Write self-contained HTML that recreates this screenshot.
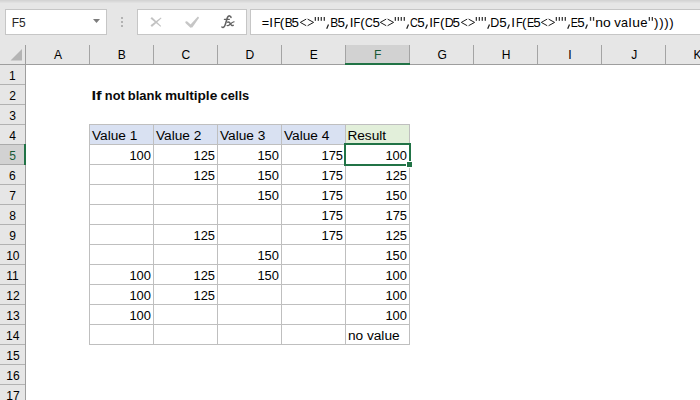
<!DOCTYPE html>
<html><head><meta charset="utf-8"><style>
html,body{margin:0;padding:0;background:#fff;overflow:hidden;width:700px;height:400px}
svg{display:block;font-family:"Liberation Sans", sans-serif}
</style></head><body>
<svg width="700" height="400" viewBox="0 0 700 400">
<rect x="0" y="0" width="700" height="400" fill="#ffffff"/>
<rect x="0" y="0" width="700" height="65" fill="#e6e6e6"/>
<rect x="0" y="0" width="700" height="1" fill="#d4d4d4"/>
<rect x="0" y="1" width="700" height="1" fill="#dadada"/>
<rect x="0" y="2" width="700" height="1" fill="#e0e0e0"/>
<rect x="5" y="9" width="102" height="26" fill="#c6c6c6"/>
<rect x="6" y="10" width="100" height="24" fill="#ffffff"/>
<rect x="137" y="9" width="110" height="26" fill="#c6c6c6"/>
<rect x="138" y="10" width="108" height="24" fill="#ffffff"/>
<rect x="250" y="9" width="456" height="26" fill="#c6c6c6"/>
<rect x="251" y="10" width="454" height="24" fill="#ffffff"/>
<text transform="translate(11.767,27.000) scale(0.8748,1)" font-size="13.70" fill="#262626">F5</text>
<path d="M93 19 L100 19 L96.5 23 Z" fill="#7c7c7c"/>
<rect x="121" y="17" width="2" height="2" fill="#b2b2b2"/>
<rect x="121" y="21" width="2" height="2" fill="#b2b2b2"/>
<rect x="121" y="25" width="2" height="2" fill="#b2b2b2"/>
<path d="M150.47 18.62 L151.93 16.98 L161.13 25.93 L160.47 26.67 Z" fill="#c2c2c2"/>
<path d="M160.88 17.52 L161.52 18.28 L151.90 27.05 L150.50 25.35 Z" fill="#c2c2c2"/>
<path d="M186.5 22.4 L191 26.5" stroke="#c6c6c6" stroke-width="2.4" fill="none" stroke-linecap="round"/>
<path d="M189.6 25.4 L197.9 16.6 L199.1 17.8 L192.3 27.4 Z" fill="#c6c6c6"/>
<g fill="none" stroke="#626262" stroke-linecap="round"><path d="M231 17.4 C231 15.6, 228.6 15.3, 227.6 17.1 C226.8 18.6, 225.8 23.6, 224.8 25.8 C224.1 27.4, 222.8 27.9, 221.9 27" stroke-width="1.55"/><path d="M224.4 19.4 L229.3 19.4" stroke-width="1.15"/><path d="M227.6 22.1 C229 21.5, 229.9 22.6, 230.6 24 C231.2 25.2, 232 25.9, 233.2 25.3" stroke-width="1.5"/><path d="M234 21.9 C232.9 21.5, 231.2 23.2, 229.8 24.5 C228.9 25.4, 228 25.8, 227.1 25.5" stroke-width="1.25"/></g>
<g font-size="13.30" fill="#000"><text transform="translate(261.79,27) scale(0.957,1)">=</text><text transform="translate(269.15,27) scale(1.000,1)">I</text><text transform="translate(273.65,27) scale(0.830,1)">F</text><text transform="translate(279.65,27) scale(1.004,1)">(</text><text transform="translate(284.84,27) scale(0.899,1)">B</text><text transform="translate(291.55,27) scale(1.005,1)">5</text><text transform="translate(330.14,27) scale(0.899,1)">B</text><text transform="translate(337.55,27) scale(1.005,1)">5</text><text transform="translate(349.65,27) scale(1.000,1)">I</text><text transform="translate(353.50,27) scale(0.830,1)">F</text><text transform="translate(360.30,27) scale(1.004,1)">(</text><text transform="translate(364.92,27) scale(0.814,1)">C</text><text transform="translate(372.40,27) scale(1.005,1)">5</text><text transform="translate(409.92,27) scale(0.814,1)">C</text><text transform="translate(417.30,27) scale(1.005,1)">5</text><text transform="translate(429.15,27) scale(1.000,1)">I</text><text transform="translate(433.00,27) scale(0.830,1)">F</text><text transform="translate(439.90,27) scale(1.004,1)">(</text><text transform="translate(444.77,27) scale(0.939,1)">D</text><text transform="translate(452.55,27) scale(1.005,1)">5</text><text transform="translate(490.37,27) scale(0.939,1)">D</text><text transform="translate(499.30,27) scale(1.005,1)">5</text><text transform="translate(511.15,27) scale(1.000,1)">I</text><text transform="translate(515.90,27) scale(0.830,1)">F</text><text transform="translate(521.90,27) scale(1.004,1)">(</text><text transform="translate(526.96,27) scale(0.807,1)">E</text><text transform="translate(533.30,27) scale(1.005,1)">5</text><text transform="translate(570.71,27) scale(0.807,1)">E</text><text transform="translate(577.30,27) scale(1.005,1)">5</text><text transform="translate(595.34,27) scale(1.042,1)">n</text><text transform="translate(602.93,27) scale(1.046,1)">o</text><text transform="translate(614.19,27) scale(0.996,1)">v</text><text transform="translate(620.91,27) scale(0.950,1)">a</text><text transform="translate(628.61,27) scale(1.050,1)">l</text><text transform="translate(632.16,27) scale(1.042,1)">u</text><text transform="translate(640.26,27) scale(0.987,1)">e</text><text transform="translate(654.05,27) scale(1.004,1)">)</text><text transform="translate(659.15,27) scale(1.004,1)">)</text><text transform="translate(664.25,27) scale(1.004,1)">)</text><text transform="translate(669.15,27) scale(1.004,1)">)</text></g>
<rect x="314.70" y="17" width="1.3" height="3.8" fill="#383838"/>
<rect x="317.70" y="17" width="1.3" height="3.8" fill="#383838"/>
<rect x="320.65" y="17" width="1.3" height="3.8" fill="#383838"/>
<rect x="323.65" y="17" width="1.3" height="3.8" fill="#383838"/>
<rect x="394.70" y="17" width="1.3" height="3.8" fill="#383838"/>
<rect x="397.70" y="17" width="1.3" height="3.8" fill="#383838"/>
<rect x="400.65" y="17" width="1.3" height="3.8" fill="#383838"/>
<rect x="403.65" y="17" width="1.3" height="3.8" fill="#383838"/>
<rect x="475.70" y="17" width="1.3" height="3.8" fill="#383838"/>
<rect x="478.70" y="17" width="1.3" height="3.8" fill="#383838"/>
<rect x="481.65" y="17" width="1.3" height="3.8" fill="#383838"/>
<rect x="484.65" y="17" width="1.3" height="3.8" fill="#383838"/>
<rect x="555.70" y="17" width="1.3" height="3.8" fill="#383838"/>
<rect x="558.70" y="17" width="1.3" height="3.8" fill="#383838"/>
<rect x="561.65" y="17" width="1.3" height="3.8" fill="#383838"/>
<rect x="564.65" y="17" width="1.3" height="3.8" fill="#383838"/>
<rect x="589.90" y="17" width="1.3" height="3.8" fill="#383838"/>
<rect x="592.90" y="17" width="1.3" height="3.8" fill="#383838"/>
<rect x="648.70" y="17" width="1.3" height="3.8" fill="#383838"/>
<rect x="651.70" y="17" width="1.3" height="3.8" fill="#383838"/>
<path d="M306.20 19.1 L300.30 22.4 L306.20 25.7 M307.60 19.1 L313.60 22.4 L307.60 25.7 M386.20 19.1 L380.30 22.4 L386.20 25.7 M387.60 19.1 L393.60 22.4 L387.60 25.7 M467.20 19.1 L461.30 22.4 L467.20 25.7 M468.60 19.1 L474.60 22.4 L468.60 25.7 M547.20 19.1 L541.30 22.4 L547.20 25.7 M548.60 19.1 L554.60 22.4 L548.60 25.7" stroke="#1e1e1e" stroke-width="1.0" fill="none"/>
<path d="M328.50 24.6 L326.70 28.7 M347.40 24.6 L345.60 28.7 M408.50 24.6 L406.70 28.7 M427.40 24.6 L425.60 28.7 M489.50 24.6 L487.70 28.7 M509.40 24.6 L507.60 28.7 M569.50 24.6 L567.70 28.7 M587.40 24.6 L585.60 28.7" stroke="#202020" stroke-width="1.25" fill="none"/>
<rect x="345" y="45" width="65" height="18" fill="#d2d2d2"/>
<rect x="89" y="45" width="1" height="19" fill="#a4a4a4"/>
<rect x="153" y="45" width="1" height="19" fill="#a4a4a4"/>
<rect x="217" y="45" width="1" height="19" fill="#a4a4a4"/>
<rect x="281" y="45" width="1" height="19" fill="#a4a4a4"/>
<rect x="345" y="45" width="1" height="19" fill="#a4a4a4"/>
<rect x="409" y="45" width="1" height="19" fill="#a4a4a4"/>
<rect x="473" y="45" width="1" height="19" fill="#a4a4a4"/>
<rect x="537" y="45" width="1" height="19" fill="#a4a4a4"/>
<rect x="601" y="45" width="1" height="19" fill="#a4a4a4"/>
<rect x="665" y="45" width="1" height="19" fill="#a4a4a4"/>
<rect x="729" y="45" width="1" height="19" fill="#a4a4a4"/>
<rect x="25" y="45" width="1" height="19" fill="#9e9e9e"/>
<rect x="0" y="64" width="700" height="1" fill="#9e9e9e"/>
<rect x="345" y="63" width="65" height="2" fill="#217346"/>
<path d="M22 49 L22 60.5 L10.5 60.5 Z" fill="#b4b4b4"/>
<text transform="translate(53.979,59.000) scale(0.8800,1)" font-size="13.70" fill="#000">A</text>
<text transform="translate(117.803,59.000) scale(0.8800,1)" font-size="13.70" fill="#000">B</text>
<text transform="translate(181.570,59.000) scale(0.8800,1)" font-size="13.70" fill="#000">C</text>
<text transform="translate(245.441,59.000) scale(0.8800,1)" font-size="13.70" fill="#000">D</text>
<text transform="translate(309.744,59.000) scale(0.8800,1)" font-size="13.70" fill="#000">E</text>
<text transform="translate(374.065,59.000) scale(0.8800,1)" font-size="13.70" fill="#185a36">F</text>
<text transform="translate(437.458,59.000) scale(0.8800,1)" font-size="13.70" fill="#000">G</text>
<text transform="translate(501.644,59.000) scale(0.8800,1)" font-size="13.70" fill="#000">H</text>
<text transform="translate(568.325,59.000) scale(0.8800,1)" font-size="13.70" fill="#000">I</text>
<text transform="translate(631.339,59.000) scale(0.8800,1)" font-size="13.70" fill="#000">J</text>
<text transform="translate(693.553,59.000) scale(0.8800,1)" font-size="13.70" fill="#000">K</text>
<rect x="0" y="65" width="25" height="335" fill="#e6e6e6"/>
<rect x="25" y="45" width="1" height="355" fill="#9e9e9e"/>
<rect x="0" y="84" width="25" height="1" fill="#b2b2b2"/>
<rect x="0" y="104" width="25" height="1" fill="#b2b2b2"/>
<rect x="0" y="124" width="25" height="1" fill="#b2b2b2"/>
<rect x="0" y="144" width="25" height="1" fill="#b2b2b2"/>
<rect x="0" y="164" width="25" height="1" fill="#b2b2b2"/>
<rect x="0" y="184" width="25" height="1" fill="#b2b2b2"/>
<rect x="0" y="204" width="25" height="1" fill="#b2b2b2"/>
<rect x="0" y="224" width="25" height="1" fill="#b2b2b2"/>
<rect x="0" y="244" width="25" height="1" fill="#b2b2b2"/>
<rect x="0" y="264" width="25" height="1" fill="#b2b2b2"/>
<rect x="0" y="284" width="25" height="1" fill="#b2b2b2"/>
<rect x="0" y="304" width="25" height="1" fill="#b2b2b2"/>
<rect x="0" y="324" width="25" height="1" fill="#b2b2b2"/>
<rect x="0" y="344" width="25" height="1" fill="#b2b2b2"/>
<rect x="0" y="364" width="25" height="1" fill="#b2b2b2"/>
<rect x="0" y="384" width="25" height="1" fill="#b2b2b2"/>
<rect x="0" y="404" width="25" height="1" fill="#b2b2b2"/>
<rect x="0" y="145" width="24" height="19" fill="#d2d2d2"/>
<rect x="0" y="144" width="25" height="1" fill="#ababab"/>
<rect x="0" y="164" width="25" height="1" fill="#ababab"/>
<rect x="24" y="144" width="2" height="21" fill="#217346"/>
<text transform="translate(8.983,80.000) scale(0.8800,1)" font-size="13.70" fill="#000">1</text>
<text transform="translate(9.148,100.000) scale(0.8800,1)" font-size="13.70" fill="#000">2</text>
<text transform="translate(9.183,120.000) scale(0.8800,1)" font-size="13.70" fill="#000">3</text>
<text transform="translate(9.186,140.000) scale(0.8800,1)" font-size="13.70" fill="#000">4</text>
<text transform="translate(9.159,160.000) scale(0.8800,1)" font-size="13.70" fill="#185a36">5</text>
<text transform="translate(9.106,180.000) scale(0.8800,1)" font-size="13.70" fill="#000">6</text>
<text transform="translate(9.142,200.000) scale(0.8800,1)" font-size="13.70" fill="#000">7</text>
<text transform="translate(9.148,220.000) scale(0.8800,1)" font-size="13.70" fill="#000">8</text>
<text transform="translate(9.150,240.000) scale(0.8800,1)" font-size="13.70" fill="#000">9</text>
<text transform="translate(6.171,260.000) scale(0.8800,1)" font-size="13.70" fill="#000">10</text>
<text transform="translate(6.230,280.000) scale(0.8800,1)" font-size="13.70" fill="#000">11</text>
<text transform="translate(6.239,300.000) scale(0.8800,1)" font-size="13.70" fill="#000">12</text>
<text transform="translate(6.201,320.000) scale(0.8800,1)" font-size="13.70" fill="#000">13</text>
<text transform="translate(6.112,340.000) scale(0.8800,1)" font-size="13.70" fill="#000">14</text>
<text transform="translate(6.189,360.000) scale(0.8800,1)" font-size="13.70" fill="#000">15</text>
<text transform="translate(6.201,380.000) scale(0.8800,1)" font-size="13.70" fill="#000">16</text>
<text transform="translate(6.239,400.000) scale(0.8800,1)" font-size="13.70" fill="#000">17</text>
<rect x="90" y="125" width="255" height="19" fill="#d9e1f2"/>
<rect x="346" y="125" width="63" height="19" fill="#e2efda"/>
<rect x="89" y="124" width="1" height="221" fill="#bfbfbf"/>
<rect x="153" y="124" width="1" height="221" fill="#bfbfbf"/>
<rect x="217" y="124" width="1" height="221" fill="#bfbfbf"/>
<rect x="281" y="124" width="1" height="221" fill="#bfbfbf"/>
<rect x="345" y="124" width="1" height="221" fill="#bfbfbf"/>
<rect x="409" y="124" width="1" height="221" fill="#bfbfbf"/>
<rect x="89" y="124" width="321" height="1" fill="#bfbfbf"/>
<rect x="89" y="144" width="321" height="1" fill="#bfbfbf"/>
<rect x="89" y="164" width="321" height="1" fill="#bfbfbf"/>
<rect x="89" y="184" width="321" height="1" fill="#bfbfbf"/>
<rect x="89" y="204" width="321" height="1" fill="#bfbfbf"/>
<rect x="89" y="224" width="321" height="1" fill="#bfbfbf"/>
<rect x="89" y="244" width="321" height="1" fill="#bfbfbf"/>
<rect x="89" y="264" width="321" height="1" fill="#bfbfbf"/>
<rect x="89" y="284" width="321" height="1" fill="#bfbfbf"/>
<rect x="89" y="304" width="321" height="1" fill="#bfbfbf"/>
<rect x="89" y="324" width="321" height="1" fill="#bfbfbf"/>
<rect x="89" y="344" width="321" height="1" fill="#bfbfbf"/>
<text transform="translate(91.485,100.000) scale(1.2168,1)" font-size="13.70" font-weight="bold" fill="#0a0a0a">If</text>
<text transform="translate(104.856,100.000) scale(0.9343,1)" font-size="13.70" font-weight="bold" fill="#0a0a0a">not</text>
<text transform="translate(127.743,100.000) scale(0.9486,1)" font-size="13.70" font-weight="bold" fill="#0a0a0a">blank</text>
<text transform="translate(164.900,100.000) scale(0.9971,1)" font-size="13.70" font-weight="bold" fill="#0a0a0a">multiple</text>
<text transform="translate(220.599,100.000) scale(0.9362,1)" font-size="13.70" font-weight="bold" fill="#0a0a0a">cells</text>
<text transform="translate(91.940,140.000)" font-size="13.70" fill="#000">Value 1</text>
<text transform="translate(155.940,140.000)" font-size="13.70" fill="#000">Value 2</text>
<text transform="translate(219.940,140.000)" font-size="13.70" fill="#000">Value 3</text>
<text transform="translate(283.940,140.000)" font-size="13.70" fill="#000">Value 4</text>
<text transform="translate(347.376,140.000)" font-size="13.70" fill="#000">Result</text>
<text transform="translate(129.414,160.000) scale(0.9446,1)" font-size="13.70" fill="#000">100</text>
<text transform="translate(193.452,160.000) scale(0.9446,1)" font-size="13.70" fill="#000">125</text>
<text transform="translate(257.414,160.000) scale(0.9446,1)" font-size="13.70" fill="#000">150</text>
<text transform="translate(321.452,160.000) scale(0.9446,1)" font-size="13.70" fill="#000">175</text>
<text transform="translate(385.414,160.000) scale(0.9446,1)" font-size="13.70" fill="#000">100</text>
<text transform="translate(193.452,180.000) scale(0.9446,1)" font-size="13.70" fill="#000">125</text>
<text transform="translate(257.414,180.000) scale(0.9446,1)" font-size="13.70" fill="#000">150</text>
<text transform="translate(321.452,180.000) scale(0.9446,1)" font-size="13.70" fill="#000">175</text>
<text transform="translate(385.452,180.000) scale(0.9446,1)" font-size="13.70" fill="#000">125</text>
<text transform="translate(257.414,200.000) scale(0.9446,1)" font-size="13.70" fill="#000">150</text>
<text transform="translate(321.452,200.000) scale(0.9446,1)" font-size="13.70" fill="#000">175</text>
<text transform="translate(385.414,200.000) scale(0.9446,1)" font-size="13.70" fill="#000">150</text>
<text transform="translate(321.452,220.000) scale(0.9446,1)" font-size="13.70" fill="#000">175</text>
<text transform="translate(385.452,220.000) scale(0.9446,1)" font-size="13.70" fill="#000">175</text>
<text transform="translate(193.452,240.000) scale(0.9446,1)" font-size="13.70" fill="#000">125</text>
<text transform="translate(321.452,240.000) scale(0.9446,1)" font-size="13.70" fill="#000">175</text>
<text transform="translate(385.452,240.000) scale(0.9446,1)" font-size="13.70" fill="#000">125</text>
<text transform="translate(257.414,260.000) scale(0.9446,1)" font-size="13.70" fill="#000">150</text>
<text transform="translate(385.414,260.000) scale(0.9446,1)" font-size="13.70" fill="#000">150</text>
<text transform="translate(129.414,280.000) scale(0.9446,1)" font-size="13.70" fill="#000">100</text>
<text transform="translate(193.452,280.000) scale(0.9446,1)" font-size="13.70" fill="#000">125</text>
<text transform="translate(257.414,280.000) scale(0.9446,1)" font-size="13.70" fill="#000">150</text>
<text transform="translate(385.414,280.000) scale(0.9446,1)" font-size="13.70" fill="#000">100</text>
<text transform="translate(129.414,300.000) scale(0.9446,1)" font-size="13.70" fill="#000">100</text>
<text transform="translate(193.452,300.000) scale(0.9446,1)" font-size="13.70" fill="#000">125</text>
<text transform="translate(385.414,300.000) scale(0.9446,1)" font-size="13.70" fill="#000">100</text>
<text transform="translate(129.414,320.000) scale(0.9446,1)" font-size="13.70" fill="#000">100</text>
<text transform="translate(385.414,320.000) scale(0.9446,1)" font-size="13.70" fill="#000">100</text>
<text transform="translate(347.890,340.000)" font-size="13.70" fill="#000">no value</text>
<path d="M345 144 H410 V165 H345 Z" fill="none" stroke="#217346" stroke-width="2"/>
<rect x="406" y="161" width="7" height="7" fill="#ffffff"/>
<rect x="407" y="162" width="5" height="5" fill="#217346"/>
</svg></body></html>
